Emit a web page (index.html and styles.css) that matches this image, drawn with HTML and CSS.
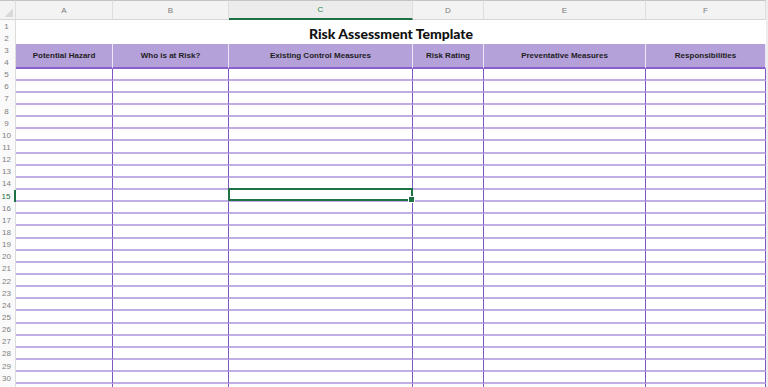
FILE: index.html
```html
<!DOCTYPE html>
<html lang="en">
<head>
  <meta charset="UTF-8" />
  <meta name="viewport" content="width=device-width, initial-scale=1.0"/>
  <link rel="stylesheet" href="styles.css">
</head>
<body>

  <div class="sheet">
    <!-- column letters -->
    <div class="corner"></div>
    <div class="col-head">A</div>
    <div class="col-head">B</div>
    <div class="col-head current">C</div>
    <div class="col-head">D</div>
    <div class="col-head">E</div>
    <div class="col-head">F</div>

    <!-- rows 1-2: title -->
    <div class="num">1</div>
    <div class="title">Risk Assessment Template</div>
    <div class="num">2</div>

    <!-- rows 3-4: table header -->
    <div class="num">3</div>
    <div class="head">Potential Hazard</div>
    <div class="head">Who is at Risk?</div>
    <div class="head">Existing Control Measures</div>
    <div class="head">Risk Rating</div>
    <div class="head">Preventative Measures</div>
    <div class="head">Responsibilities</div>
    <div class="num">4</div>

    <!-- rows 5-30: blank entries -->
    <div class="num">5</div><div class="cell"></div><div class="cell"></div><div class="cell"></div><div class="cell"></div><div class="cell"></div><div class="cell"></div>
    <div class="num">6</div><div class="cell"></div><div class="cell"></div><div class="cell"></div><div class="cell"></div><div class="cell"></div><div class="cell"></div>
    <div class="num">7</div><div class="cell"></div><div class="cell"></div><div class="cell"></div><div class="cell"></div><div class="cell"></div><div class="cell"></div>
    <div class="num">8</div><div class="cell"></div><div class="cell"></div><div class="cell"></div><div class="cell"></div><div class="cell"></div><div class="cell"></div>
    <div class="num">9</div><div class="cell"></div><div class="cell"></div><div class="cell"></div><div class="cell"></div><div class="cell"></div><div class="cell"></div>
    <div class="num">10</div><div class="cell"></div><div class="cell"></div><div class="cell"></div><div class="cell"></div><div class="cell"></div><div class="cell"></div>
    <div class="num">11</div><div class="cell"></div><div class="cell"></div><div class="cell"></div><div class="cell"></div><div class="cell"></div><div class="cell"></div>
    <div class="num">12</div><div class="cell"></div><div class="cell"></div><div class="cell"></div><div class="cell"></div><div class="cell"></div><div class="cell"></div>
    <div class="num">13</div><div class="cell"></div><div class="cell"></div><div class="cell"></div><div class="cell"></div><div class="cell"></div><div class="cell"></div>
    <div class="num">14</div><div class="cell"></div><div class="cell"></div><div class="cell"></div><div class="cell"></div><div class="cell"></div><div class="cell"></div>
    <div class="num current">15</div><div class="cell"></div><div class="cell"></div><div class="cell active"></div><div class="cell"></div><div class="cell"></div><div class="cell"></div>
    <div class="num">16</div><div class="cell"></div><div class="cell"></div><div class="cell"></div><div class="cell"></div><div class="cell"></div><div class="cell"></div>
    <div class="num">17</div><div class="cell"></div><div class="cell"></div><div class="cell"></div><div class="cell"></div><div class="cell"></div><div class="cell"></div>
    <div class="num">18</div><div class="cell"></div><div class="cell"></div><div class="cell"></div><div class="cell"></div><div class="cell"></div><div class="cell"></div>
    <div class="num">19</div><div class="cell"></div><div class="cell"></div><div class="cell"></div><div class="cell"></div><div class="cell"></div><div class="cell"></div>
    <div class="num">20</div><div class="cell"></div><div class="cell"></div><div class="cell"></div><div class="cell"></div><div class="cell"></div><div class="cell"></div>
    <div class="num">21</div><div class="cell"></div><div class="cell"></div><div class="cell"></div><div class="cell"></div><div class="cell"></div><div class="cell"></div>
    <div class="num">22</div><div class="cell"></div><div class="cell"></div><div class="cell"></div><div class="cell"></div><div class="cell"></div><div class="cell"></div>
    <div class="num">23</div><div class="cell"></div><div class="cell"></div><div class="cell"></div><div class="cell"></div><div class="cell"></div><div class="cell"></div>
    <div class="num">24</div><div class="cell"></div><div class="cell"></div><div class="cell"></div><div class="cell"></div><div class="cell"></div><div class="cell"></div>
    <div class="num">25</div><div class="cell"></div><div class="cell"></div><div class="cell"></div><div class="cell"></div><div class="cell"></div><div class="cell"></div>
    <div class="num">26</div><div class="cell"></div><div class="cell"></div><div class="cell"></div><div class="cell"></div><div class="cell"></div><div class="cell"></div>
    <div class="num">27</div><div class="cell"></div><div class="cell"></div><div class="cell"></div><div class="cell"></div><div class="cell"></div><div class="cell"></div>
    <div class="num">28</div><div class="cell"></div><div class="cell"></div><div class="cell"></div><div class="cell"></div><div class="cell"></div><div class="cell"></div>
    <div class="num">29</div><div class="cell"></div><div class="cell"></div><div class="cell"></div><div class="cell"></div><div class="cell"></div><div class="cell"></div>
    <div class="num">30</div><div class="cell"></div><div class="cell"></div><div class="cell"></div><div class="cell"></div><div class="cell"></div><div class="cell"></div>
    <div class="num"></div><div class="cell"></div><div class="cell"></div><div class="cell"></div><div class="cell"></div><div class="cell"></div><div class="cell"></div>
  </div>

</body>
</html>
```

FILE: styles.css
```css
* {
  margin: 0;
  padding: 0;
  box-sizing: border-box;
}

html, body {
  width: 100%;
  height: 100%;
  overflow: hidden;
  background: #ededed;
  font-family: "Liberation Sans", Arial, sans-serif;
}

.sheet {
  display: grid;
  grid-template-columns: 16px 97px 116px 184px 71px 162px 120px;
  grid-template-rows: 20px repeat(31, 12.15px);
  width: 766px;
  background: #fff;
}

/* column letters */
.corner,
.col-head {
  background: #f3f3f3;
  border-top: 1px solid #c4c4c4;
  border-bottom: 1px solid #d6d6d6;
  border-right: 1px solid #dedede;
}

.corner {
  position: relative;
}

.corner::after {
  content: "";
  position: absolute;
  right: 2px;
  bottom: 2px;
  width: 9px;
  height: 9px;
  background: linear-gradient(135deg, transparent 50%, #d9d9d9 50%);
}

.col-head {
  display: flex;
  align-items: center;
  justify-content: center;
  font-size: 8px;
  color: #7a7a7a;
}

.col-head.current {
  color: #1f8a4c;
  border-bottom: 2px solid #1e7145;
  background: #ececec;
}

/* row numbers */
.num {
  display: flex;
  align-items: center;
  justify-content: center;
  padding-right: 2px;
  font-size: 8px;
  color: #808080;
  background: #fafafa;
  border-right: 1px solid #dcdcdc;
}

.num.current {
  color: #1e7145;
  border-right: 2px solid #1e7145;
}

.title {
  grid-column: span 6;
  grid-row: span 2;
  display: flex;
  align-items: center;
  justify-content: center;
  padding-top: 2px;
  font-family: Lato, "Liberation Sans", sans-serif;
  font-weight: 900;
  font-size: 14px;
  color: #111;
}

.head {
  grid-row: span 2;
  display: flex;
  align-items: center;
  justify-content: center;
  padding-top: 1px;
  background: #b5a1da;
  border-right: 1px solid #ece6f7;
  border-bottom: 2px solid #8760cb;
  font-weight: bold;
  font-size: 8px;
  color: #1e1e1e;
}

.head:last-of-type {
  border-right-color: #c9b8e8;
}

.cell {
  border-right: 1px solid #7d56c4;
  border-bottom: 2px solid #bfade3;
}

/* selected cell with its fill handle */
.cell.active {
  position: relative;
}

.cell.active::before {
  content: "";
  position: absolute;
  top: -2px;
  left: -1px;
  right: -1px;
  bottom: -1px;
  border: 2px solid #1e7145;
}

.cell.active::after {
  content: "";
  position: absolute;
  right: -3px;
  bottom: -3px;
  width: 5px;
  height: 5px;
  background: #1e7145;
  border: 1px solid #fff;
}
```
